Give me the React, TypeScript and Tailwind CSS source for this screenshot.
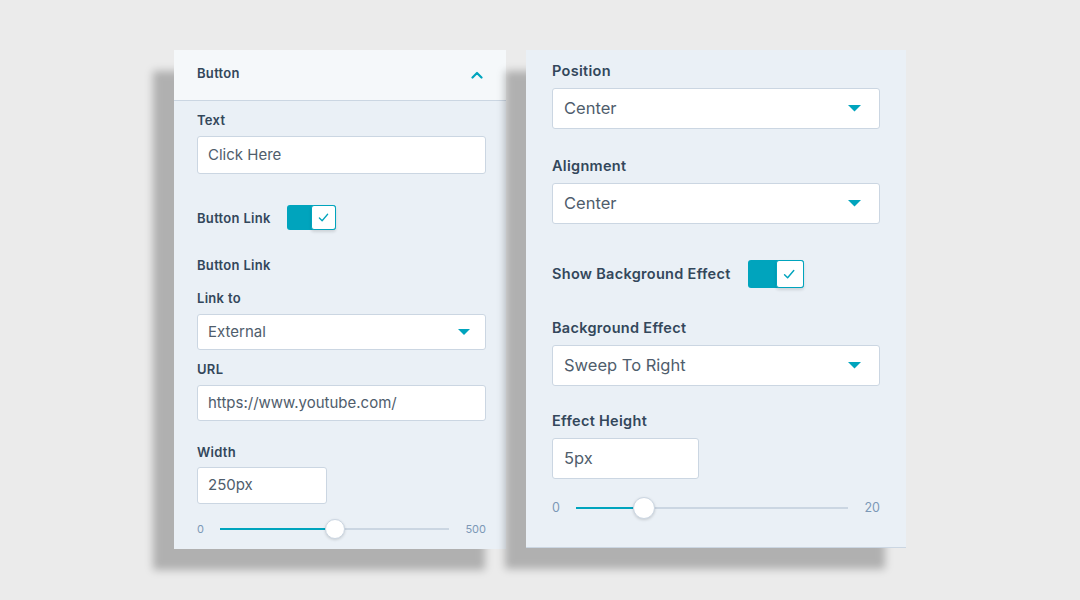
import React from 'react';

const font = { fontFamily: 'Inter, "Noto Sans", Arial, sans-serif' };

function Caret({ size = 12 }: { size?: number }) {
  return (
    <svg width={size} height={size / 2} viewBox="0 0 12 6" className="shrink-0">
      <path d="M0 0 L12 0 L6 6 Z" fill="#00a4bd" />
    </svg>
  );
}

function Toggle({ w, h }: { w: number; h: number }) {
  return (
    <div className="flex items-center rounded-[3px] bg-[#00a4bd]" style={{ width: w, height: h }}>
      <div className="flex-1" />
      <div
        className="flex items-center justify-center rounded-[3px] border border-[#00a4bd] bg-white shadow-[0_2px_3px_rgba(0,0,0,0.12)]"
        style={{ width: h, height: h }}
      >
        <svg width={h * 0.44} height={h * 0.44} viewBox="0 0 12 12" fill="none">
          <path d="M1.5 6.5 L4.5 9.5 L10.5 2.5" stroke="#00a4bd" strokeWidth="1.4" strokeLinecap="round" strokeLinejoin="round" />
        </svg>
      </div>
    </div>
  );
}

function Slider({ pct, min, max, thumb, text }: { pct: number; min: string; max: string; thumb: number; text: string }) {
  return (
    <div className="flex items-center" style={{ height: thumb }}>
      <span className={`text-[#7c98b6] ${text}`}>{min}</span>
      <div className="relative flex-1 h-[2px] bg-[#cbd6e2] ml-4 mr-4">
        <div className="absolute left-0 top-0 h-[2px] bg-[#00a4bd]" style={{ width: `${pct}%` }} />
        <div
          className="absolute top-1/2 rounded-full border border-[#cbd6e2] bg-white shadow-[0_1px_3px_rgba(0,0,0,0.15)]"
          style={{ width: thumb, height: thumb, left: `calc(${pct}% - ${thumb / 2}px)`, marginTop: -thumb / 2 }}
        />
      </div>
      <span className={`text-[#7c98b6] ${text}`}>{max}</span>
    </div>
  );
}

function LeftPanel() {
  const label = 'text-[13px] leading-[16px] font-semibold tracking-[0.3px] text-[#33475b]';
  const box = 'flex items-center rounded-[3px] border border-[#cbd6e2] bg-white px-[10px] text-[15px] text-[#4f5d6c]';
  return (
    <div className="w-[332px] h-[499px] shrink-0 bg-[#eaf0f6] shadow-[-21px_21px_8px_rgba(0,0,0,0.25)]">
      <div className="h-[51px] flex items-center justify-between pl-[23px] pr-[22px] bg-[#f5f8fa] border-b border-[#cbd6e2]">
        <span className="text-[13px] font-semibold tracking-[0.3px] text-[#33475b] -mt-[2px]">Button</span>
        <svg width="12" height="8" viewBox="0 0 12 8" fill="none" className="mr-[1px]">
          <path d="M1.5 6.5 L6 2 L10.5 6.5" stroke="#00a4bd" strokeWidth="2.2" strokeLinecap="round" strokeLinejoin="round" />
        </svg>
      </div>
      <div className="pl-[23px] pr-[20px] flex flex-col">
        <div className={`${label} mt-[11px]`}>Text</div>
        <div className={`${box} mt-[8px] h-[38px]`}>Click Here</div>
        <div className="mt-[31px] flex items-center gap-[16px] h-[25px]">
          <span className={label}>Button Link</span>
          <Toggle w={49} h={25} />
        </div>
        <div className={`${label} mt-[27px]`}>Button Link</div>
        <div className={`${label} mt-[17px]`}>Link to</div>
        <div className={`${box} mt-[8px] h-[36px] justify-between pr-[15px]`}>
          <span>External</span>
          <Caret size={12} />
        </div>
        <div className={`${label} mt-[11px]`}>URL</div>
        <div className={`${box} mt-[8px] h-[36px]`}>https://www.youtube.com/</div>
        <div className={`${label} mt-[23px]`}>Width</div>
        <div className={`${box} mt-[7px] h-[37px] w-[130px]`}>250px</div>
        <div className="mt-[15px]">
          <Slider pct={50} min="0" max="500" thumb={20} text="text-[11px]" />
        </div>
      </div>
    </div>
  );
}

function RightPanel() {
  const label = 'text-[14.5px] leading-[18px] font-semibold tracking-[0.3px] text-[#33475b]';
  const box = 'flex items-center rounded-[3px] border border-[#cbd6e2] bg-white px-[11px] text-[16.5px] text-[#4f5d6c]';
  return (
    <div className="w-[380px] h-[498px] shrink-0 bg-[#eaf0f6] border-b border-[#cbd6e2] shadow-[-21px_21px_8px_rgba(0,0,0,0.25)] px-[26px] flex flex-col">
      <div className={`${label} mt-[12px]`}>Position</div>
      <div className={`${box} mt-[8px] h-[41px] justify-between pr-[18px]`}>
        <span>Center</span>
        <Caret size={13} />
      </div>
      <div className={`${label} mt-[28px]`}>Alignment</div>
      <div className={`${box} mt-[8px] h-[41px] justify-between pr-[18px]`}>
        <span>Center</span>
        <Caret size={13} />
      </div>
      <div className="mt-[36px] flex items-center gap-[17px] h-[28px]">
        <span className={label}>Show Background Effect</span>
        <Toggle w={56} h={28} />
      </div>
      <div className={`${label} mt-[31px]`}>Background Effect</div>
      <div className={`${box} mt-[8px] h-[41px] justify-between pr-[18px]`}>
        <span>Sweep To Right</span>
        <Caret size={13} />
      </div>
      <div className={`${label} mt-[26px]`}>Effect Height</div>
      <div className={`${box} mt-[8px] h-[41px] w-[147px]`}>5px</div>
      <div className="mt-[18px]">
        <Slider pct={25} min="0" max="20" thumb={22} text="text-[12.5px]" />
      </div>
    </div>
  );
}

export default function App() {
  return (
    <div className="w-[1080px] h-[600px] bg-[#ebebeb] overflow-hidden" style={font}>
      <div className="flex items-start gap-[20px] pt-[50px] pl-[174px]">
        <LeftPanel />
        <RightPanel />
      </div>
    </div>
  );
}
